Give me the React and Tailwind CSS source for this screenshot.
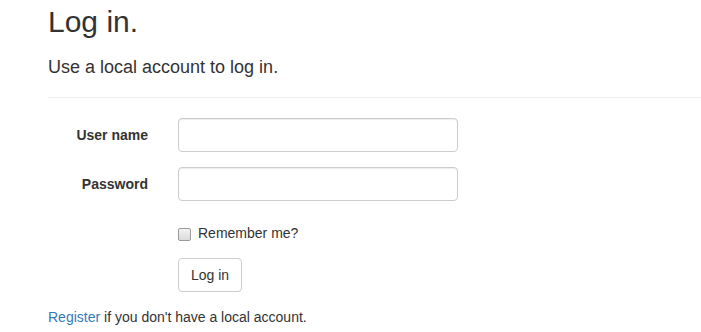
export default function App() {
  return (
    <div className="pt-[5px] pl-[48px] font-['Liberation_Sans',Arial,sans-serif] text-[14px] leading-[20px] text-[#333] bg-white min-h-[332px]">
      <h2 className="text-[30px] leading-[33px] font-normal">Log in.</h2>
      <h4 className="mt-[20px] text-[18px] leading-[19px] font-normal">Use a local account to log in.</h4>
      <hr className="mt-[20px] mb-[20px] border-0 border-t border-[#eee]" />
      <form onSubmit={(e) => e.preventDefault()}>
        <div className="flex mb-[15px]">
          <label className="w-[115px] pr-[15px] pt-[7px] text-right font-bold">User name</label>
          <input
            type="text"
            className="ml-[15px] w-[280px] h-[34px] px-[12px] py-[6px] border border-[#ccc] rounded-[4px] bg-white shadow-[inset_0_1px_1px_rgba(0,0,0,0.075)] outline-none"
          />
        </div>
        <div className="flex mb-[15px]">
          <label className="w-[115px] pr-[15px] pt-[7px] text-right font-bold">Password</label>
          <input
            type="password"
            className="ml-[15px] w-[280px] h-[34px] px-[12px] py-[6px] border border-[#ccc] rounded-[4px] bg-white shadow-[inset_0_1px_1px_rgba(0,0,0,0.075)] outline-none"
          />
        </div>
        <div className="flex mb-[15px] pl-[130px]">
          <label className="flex items-start pt-[7px] min-h-[27px]">
            <input
              type="checkbox"
              className="appearance-none w-[13px] h-[13px] mt-[5px] mr-[7px] border border-[#9a9a9a] rounded-[2px] bg-gradient-to-b from-[#f2f2f2] to-[#dcdcdc]"
            />
            <span>Remember me?</span>
          </label>
        </div>
        <div className="flex mb-[15px] pl-[130px]">
          <button
            type="submit"
            className="h-[34px] px-[12px] py-[6px] border border-[#ccc] rounded-[4px] bg-white text-[#333] text-[14px] leading-[20px]"
          >
            Log in
          </button>
        </div>
      </form>
      <p>
        <a href="#" className="text-[#337ab7]">Register</a> if you don't have a local account.
      </p>
    </div>
  );
}
